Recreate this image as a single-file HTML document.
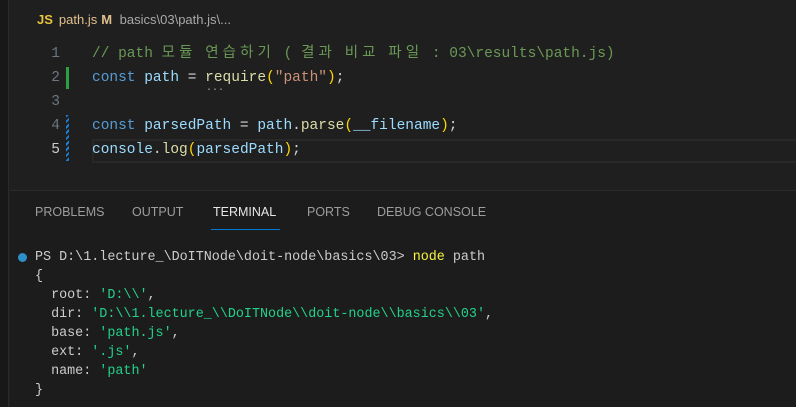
<!DOCTYPE html>
<html><head><meta charset="utf-8"><style>
*{margin:0;padding:0;box-sizing:border-box}
body{width:796px;height:407px;overflow:hidden;background:#1f1f1f;position:relative;font-family:"Liberation Mono","Noto Sans CJK KR",monospace}
.strip{position:absolute;left:0;top:0;width:9px;height:407px;background:#181818;border-right:1px solid #2b2b2b}
.crumb{position:absolute;left:37px;top:12px;font:13px "Liberation Sans",sans-serif;color:#a9a9a9;white-space:nowrap}
.crumb .js{color:#e8c43e;font-weight:bold;margin-right:6px}
.crumb .fn{color:#e2c08d}
.crumb .m{color:#e2c08d;font-weight:bold;margin:0 4px}
.ln{position:absolute;left:40px;width:20px;text-align:right;font-size:14.5px;color:#6e7681;line-height:24px}
.code{position:absolute;left:92px;font-size:14.5px;line-height:24px;height:24px;white-space:pre;color:#d4d4d4}
.kr{font-family:"Noto Sans CJK KR",sans-serif;letter-spacing:4.1px;line-height:1}
.cur{position:absolute;left:92px;top:139px;right:0;height:24px;border:2px solid #282828;border-right:none}
.c{color:#6a9955}.k{color:#569cd6}.v{color:#9cdcfe}.f{color:#dcdcaa}.s{color:#ce9178}.b{color:#ffd700}
.gut{position:absolute;left:66px;width:3px}
.panel{position:absolute;left:10px;top:190px;right:0;bottom:0;background:#1c1c1c;border-top:1px solid #2b2b2b}
.tabs{position:absolute;top:205px;left:35px;font:12.5px "Liberation Sans",sans-serif;color:#9d9d9d;white-space:nowrap}
.tabs span{position:absolute}
.term{position:absolute;left:35px;top:248px;font-size:13.4px;line-height:19px;white-space:pre;color:#cccccc}
.g{color:#23d18b}.y{color:#f5f543}
</style></head><body>
<div class="strip"></div>
<div class="crumb"><span class="js">JS</span><span class="fn">path.js</span><span class="m">M</span> basics\03\path.js\...</div>
<div class="cur"></div>
<div class="ln" style="top:42px">1</div>
<div class="ln" style="top:66px">2</div>
<div class="ln" style="top:90px">3</div>
<div class="ln" style="top:114px">4</div>
<div class="ln" style="top:138px;color:#ccc">5</div>
<div class="gut" style="top:67px;height:22px;background:#2ea043"></div>
<div class="gut" style="top:115px;height:46px;background:repeating-linear-gradient(135deg,#1b81d8 0 2px,#1f1f1f 2px 4px)"></div>
<div class="code" style="top:42px"><span class="c">// path <span class="kr">모듈</span> <span class="kr">연습하기</span> ( <span class="kr">결과</span> <span class="kr">비교</span> <span class="kr">파일</span> : 03\results\path.js)</span></div>
<div class="code" style="top:66px"><span class="k">const</span> <span class="v">path</span> = <span class="f">require</span><span class="b">(</span><span class="s">"path"</span><span class="b">)</span>;</div>
<div style="position:absolute;left:206px;top:88px;color:#aaa;font-size:10px;line-height:6px">···</div>
<div class="code" style="top:114px"><span class="k">const</span> <span class="v">parsedPath</span> = <span class="v">path</span>.<span class="f">parse</span><span class="b">(</span><span class="v">__filename</span><span class="b">)</span>;</div>
<div class="code" style="top:138px"><span class="v">console</span>.<span class="f">log</span><span class="b">(</span><span class="v">parsedPath</span><span class="b">)</span>;</div>
<div class="panel"></div>
<div class="tabs"><span style="left:0">PROBLEMS</span><span style="left:97px">OUTPUT</span><span style="left:178px;color:#e7e7e7">TERMINAL</span><span style="left:272px">PORTS</span><span style="left:342px">DEBUG CONSOLE</span></div>
<div style="position:absolute;left:211px;top:229px;width:69px;height:1px;background:#0078d4"></div>
<div style="position:absolute;left:18px;top:253px;width:9px;height:9px;border-radius:50%;background:#2f8fc8"></div>
<div class="term">PS D:\1.lecture_\DoITNode\doit-node\basics\03&gt; <span class="y">node</span> path
{
  root: <span class="g">'D:\\'</span>,
  dir: <span class="g">'D:\\1.lecture_\\DoITNode\\doit-node\\basics\\03'</span>,
  base: <span class="g">'path.js'</span>,
  ext: <span class="g">'.js'</span>,
  name: <span class="g">'path'</span>
}</div>
</body></html>
